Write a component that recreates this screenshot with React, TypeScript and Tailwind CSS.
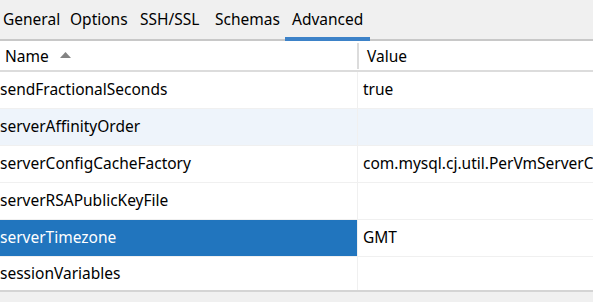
import React from 'react';

const tabs = [
  { label: 'General', w: 'w-[67px]' },
  { label: 'Options', w: 'w-[70px]' },
  { label: 'SSH/SSL', w: 'w-[75px]' },
  { label: 'Schemas', w: 'w-[70px]' },
];

const rows = [
  { name: 'sendFractionalSeconds', value: 'true' },
  { name: 'serverAffinityOrder', value: '' },
  { name: 'serverConfigCacheFactory', value: 'com.mysql.cj.util.PerVmServerConfigCacheFactory' },
  { name: 'serverRSAPublicKeyFile', value: '' },
  { name: 'serverTimezone', value: 'GMT' },
  { name: 'sessionVariables', value: '' },
];

export default function App() {
  return (
    <div
      className="w-[593px] h-[302px] bg-[#f0f0f0] overflow-hidden text-[15.5px] text-black flex flex-col"
      style={{ fontFamily: '"Noto Sans", "Open Sans", sans-serif' }}
    >
      {/* tabs */}
      <div className="h-[41px] flex items-stretch border-b-2 border-[#c8c8c8] pl-[3px] shrink-0">
        {tabs.map((t) => (
          <div key={t.label} className={t.w + ' flex items-center pt-[1px]'}>
            <span className="leading-none">{t.label}</span>
          </div>
        ))}
        <div className="w-[85px] flex items-center pl-[7px] -mb-[2px] border-b-4 border-[#3d82c8] pt-[2px]">
          <span className="leading-none">Advanced</span>
        </div>
      </div>

      {/* table */}
      <div className="bg-white flex flex-col border-b-2 border-[#d4d4d4] whitespace-nowrap overflow-hidden">
        <div className="h-[31px] flex items-center border-b-2 border-[#dcdcdc]">
          <div className="w-[359px] shrink-0 h-[26px] flex items-center pl-[5px] pt-[2px] border-r-2 border-[#dcdcdc]">
            <span>Name</span>
            <svg width="11" height="6" viewBox="0 0 11 6" className="ml-[11px] mt-[-3px]">
              <polygon points="5.5,0 11,6 0,6" fill="#838383" />
            </svg>
          </div>
          <div className="pl-[8px] pt-[2px]">Value</div>
        </div>
        {rows.map((r, i) => {
          const sel = r.name === 'serverTimezone';
          return (
            <div
              key={r.name}
              className={
                'flex items-stretch ' +
                (i === rows.length - 1 ? 'h-[33px] ' : 'h-[37px] border-b border-[#f0f0f0] ') +
                (i === 1 ? 'bg-[#eef4fb]' : '')
              }
            >
              <div
                className={
                  'w-[358px] shrink-0 flex items-center border-r border-[#f0f0f0] ' +
                  (sel ? 'bg-[#2175be] text-white' : '')
                }
              >
                {r.name}
              </div>
              <div className="flex items-center pl-[5px]">{r.value}</div>
            </div>
          );
        })}
      </div>
    </div>
  );
}
